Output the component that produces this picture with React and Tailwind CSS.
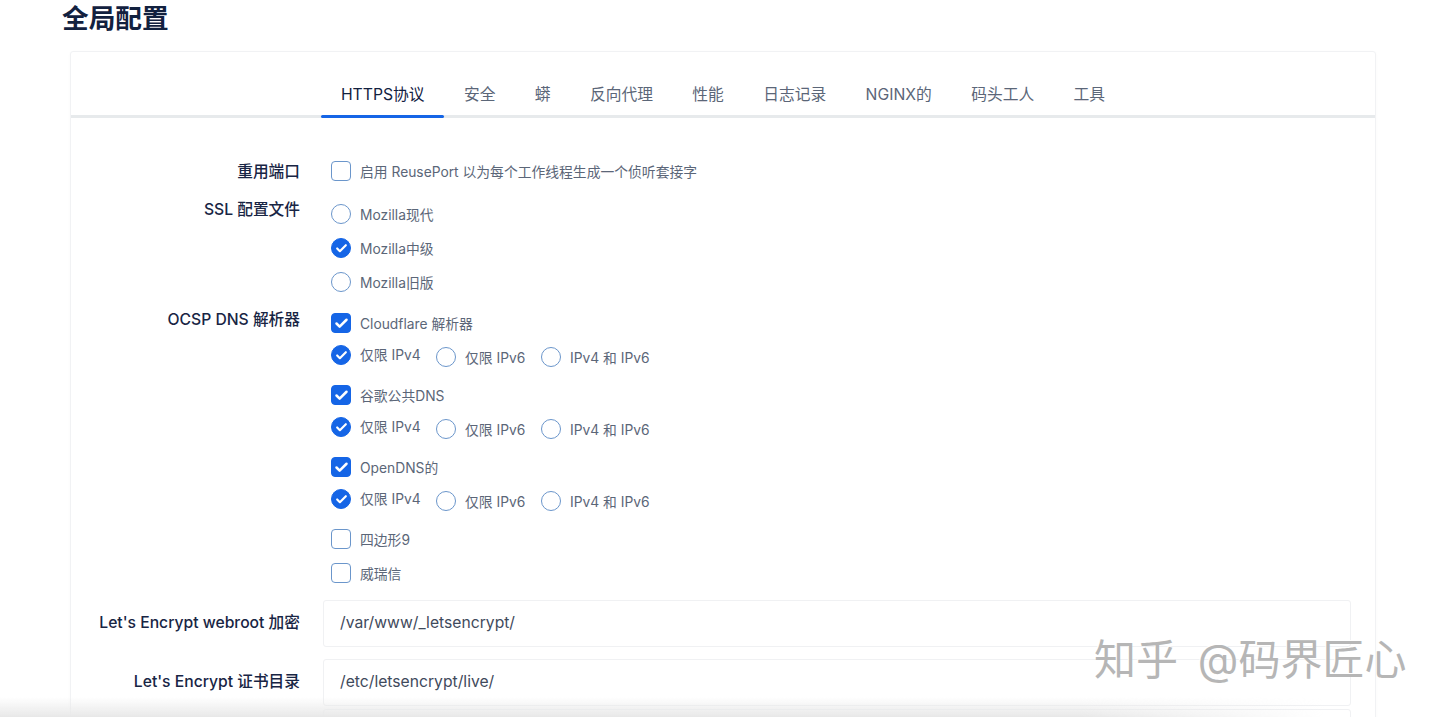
import { Check } from 'lucide-react';

const tabs = ['HTTPS协议', '安全', '蟒', '反向代理', '性能', '日志记录', 'NGINX的', '码头工人', '工具'];

const Box = ({ on }) => (
    <span className={`w-5 h-5 rounded-[4px] shrink-0 flex items-center justify-center border-[1.5px] ${on ? 'bg-[#1565e6] border-[#1565e6]' : 'bg-white border-[#6b96cb]'}`}>
        {on && <Check size={15} strokeWidth={4} className="text-white" />}
    </span>
);

const Radio = ({ on }) => (
    <span className={`w-5 h-5 rounded-full shrink-0 flex items-center justify-center border-[1.5px] ${on ? 'bg-[#1565e6] border-[#1565e6]' : 'bg-white border-[#6b96cb]'}`}>
        {on && <Check size={13} strokeWidth={4} className="text-white" />}
    </span>
);

const Text = ({ children }) => <span className="pt-[2px]">{children}</span>;

const Option = ({ children, className = '' }) => (
    <div className={`flex items-center gap-[9px] h-[34px] text-[13.8px] text-[#5b6678] ${className}`}>{children}</div>
);

const IpRow = () => (
    <div className="flex items-start h-[38px] text-[13.8px] text-[#5b6678]">
        <div className="flex items-center gap-[9px] h-[30px] w-[105px]">
            <Radio on />
            <span>仅限 IPv4</span>
        </div>
        <div className="flex items-center gap-[9px] h-[34px] w-[105px]">
            <Radio />
            <Text>仅限 IPv6</Text>
        </div>
        <div className="flex items-center gap-[9px] h-[34px]">
            <Radio />
            <Text>IPv4 和 IPv6</Text>
        </div>
    </div>
);

const Resolver = ({ name }) => (
    <div>
        <Option>
            <Box on />
            <Text>{name}</Text>
        </Option>
        <IpRow />
    </div>
);

const Label = ({ children, className = '' }) => (
    <div className={`w-[229px] shrink-0 text-right text-[15.7px] font-medium text-[#182544] ${className}`}>{children}</div>
);

const Field = ({ label, value }) => (
    <div className="flex items-center gap-[23px]">
        <Label className="pb-[2px]">{label}</Label>
        <div className="flex-1 h-[47px] flex items-center px-[16px] pb-[1px] border border-[#f0f1f3] rounded-[3px] text-[15.7px] text-[#3f4a5c]">{value}</div>
    </div>
);

export default function App() {
    return (
        <div className="relative h-[717px] overflow-hidden bg-white font-['Inter','Noto_Sans_CJK_SC',sans-serif]">
            <h1 className="pl-[62px] h-[51px] text-[26.7px] leading-[36px] font-semibold text-[#12213f]">全局配置</h1>

            <div className="mx-[70px] w-[1306px] pb-10 border border-[#f1f2f4] rounded-[3px] shadow-[0_1px_3px_rgba(0,0,0,0.03)]">
                <div className="flex justify-center h-[66px] items-end border-b-[3px] border-[#e7eaec]">
                    {tabs.map((tab, index) => (
                        <div
                            key={tab}
                            className={`relative h-[44px] px-[19.7px] text-[15.75px] leading-[48px] ${index === 0 ? 'text-[#12213f]' : 'text-[#5b6678]'}`}
                        >
                            {tab}
                            {index === 0 && <span className="absolute left-0 right-0 -bottom-[3px] h-[3px] rounded-full bg-[#1565e6]"></span>}
                        </div>
                    ))}
                </div>

                <div className="pt-[36px] pr-[24px]">
                    <div className="flex gap-[23px] h-[38px]">
                        <Label className="leading-[36px]">重用端口</Label>
                        <Option className="pl-2">
                            <Box />
                            <Text>启用 ReusePort 以为每个工作线程生成一个侦听套接字</Text>
                        </Option>
                    </div>

                    <div className="flex gap-[23px]">
                        <Label className="leading-[36px]">SSL 配置文件</Label>
                        <div className="pl-2 pt-[5px]">
                            <Option><Radio /><Text>Mozilla现代</Text></Option>
                            <Option><Radio on /><Text>Mozilla中级</Text></Option>
                            <Option><Radio /><Text>Mozilla旧版</Text></Option>
                        </div>
                    </div>

                    <div className="flex gap-[23px] mt-[7px] mb-[10px]">
                        <Label className="leading-[28px]">OCSP DNS 解析器</Label>
                        <div className="pl-2">
                            <Resolver name="Cloudflare 解析器" />
                            <Resolver name="谷歌公共DNS" />
                            <Resolver name="OpenDNS的" />
                            <Option><Box /><Text>四边形9</Text></Option>
                            <Option><Box /><Text>威瑞信</Text></Option>
                        </div>
                    </div>

                    <div className="flex flex-col gap-3">
                        <Field label="Let's Encrypt webroot 加密" value="/var/www/_letsencrypt/" />
                        <Field label="Let's Encrypt 证书目录" value="/etc/letsencrypt/live/" />
                    </div>
                    <div className="mt-[3px]">
                        <Field label="" value="" />
                    </div>
                </div>
            </div>

            {/* watermark + bottom fade sit over the page */}
            <div className="absolute left-[1094px] top-[634px] text-[42px] leading-[52px] whitespace-nowrap [word-spacing:8px] text-[#b6b6b6] [text-shadow:-1px_-1px_0_#ffffff]">知乎 @码界匠心</div>
            <div className="absolute left-0 right-0 bottom-0 h-[20px] bg-gradient-to-b from-transparent to-[#e8e8e8] [mask-image:linear-gradient(to_right,black_75%,transparent_92%)]"></div>
        </div>
    );
}
